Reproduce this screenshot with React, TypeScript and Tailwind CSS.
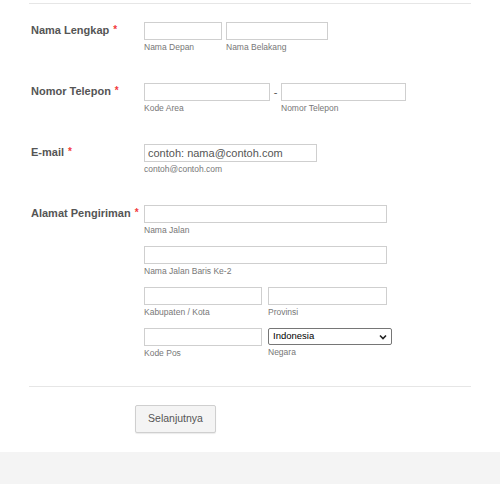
import React from 'react';

const font = { fontFamily: '"Liberation Sans", Arial, sans-serif' };

const Input: React.FC<{ w: string; placeholder?: string }> = ({ w, placeholder }) => (
  <input
    type="text"
    placeholder={placeholder}
    className={`${w} h-[18px] border border-[#cfcfcf] bg-white px-[3px] text-[11px] text-[#333] placeholder:text-[#555] outline-none`}
  />
);

const Sub: React.FC<{ children: React.ReactNode }> = ({ children }) => (
  <div className="mt-[1px] text-[8.5px] leading-[12px] text-[#777]">{children}</div>
);

const Field: React.FC<{ w: string; sub: string; placeholder?: string }> = ({ w, sub, placeholder }) => (
  <div className="flex flex-col">
    <Input w={w} placeholder={placeholder} />
    <Sub>{sub}</Sub>
  </div>
);

const Row: React.FC<{ label: string; children: React.ReactNode }> = ({ label, children }) => (
  <div className="flex py-[15px]">
    <div className="w-[115px] pl-[2px] text-[11px] font-bold leading-[16px] text-[#555]">
      {label}
      <span className="relative -top-[1px] ml-[4px] text-[10px] text-[#f23a3c]">*</span>
    </div>
    <div className="flex flex-col">{children}</div>
  </div>
);

export default function App() {
  return (
    <div className="w-[500px] h-[484px] flex flex-col bg-white" style={font}>
      <div className="mx-[29px] mt-[3px] border-t border-[#e6e6e6] pt-[3px] pb-[12px]">
        <Row label="Nama Lengkap">
          <div className="flex gap-[4px]">
            <Field w="w-[78px]" sub="Nama Depan" />
            <Field w="w-[102px]" sub="Nama Belakang" />
          </div>
        </Row>
        <Row label="Nomor Telepon">
          <div className="flex">
            <Field w="w-[126px]" sub="Kode Area" />
            <div className="w-[11px] text-center text-[11px] leading-[18px] text-[#555]">-</div>
            <Field w="w-[125px]" sub="Nomor Telepon" />
          </div>
        </Row>
        <Row label="E-mail">
          <Field w="w-[173px]" sub="contoh@contoh.com" placeholder="contoh: nama@contoh.com" />
        </Row>
        <Row label="Alamat Pengiriman">
          <div className="flex flex-col gap-[10px]">
            <Field w="w-[243px]" sub="Nama Jalan" />
            <Field w="w-[243px]" sub="Nama Jalan Baris Ke-2" />
            <div className="flex gap-[6px]">
              <Field w="w-[118px]" sub="Kabupaten / Kota" />
              <Field w="w-[119px]" sub="Provinsi" />
            </div>
            <div className="flex gap-[6px]">
              <Field w="w-[118px]" sub="Kode Pos" />
              <div className="flex flex-col">
                <div className="flex h-[17px] w-[124px] items-center justify-between rounded-[2px] border border-[#767676] bg-white pl-[4px] pr-[4px]">
                  <span className="text-[9.5px] text-black">Indonesia</span>
                  <svg width="8" height="6" viewBox="0 0 8 6" fill="none">
                    <path d="M1 1.5l3 3 3-3" stroke="#222" strokeWidth="1.6" />
                  </svg>
                </div>
                <Sub>Negara</Sub>
              </div>
            </div>
          </div>
        </Row>
      </div>
      <div className="mx-[29px] border-t border-[#e6e6e6] pt-[18px] pb-[19px] pl-[106px]">
        <button className="h-[28px] w-[81px] rounded-[2px] border border-[#cfcfcf] bg-[#f4f4f4] text-[10.5px] text-[#555] shadow-[0_1px_1px_rgba(0,0,0,0.08)]">
          Selanjutnya
        </button>
      </div>
      <div className="flex-1 bg-[#f4f4f4]" />
    </div>
  );
}
